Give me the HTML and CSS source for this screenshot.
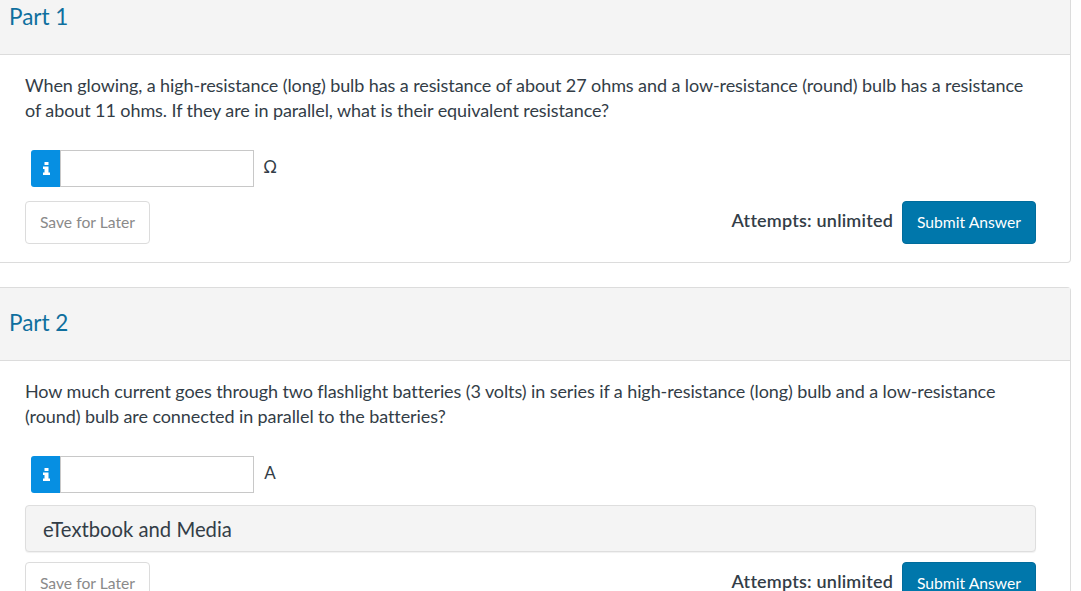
FILE: index.html
```html
<!DOCTYPE html>
<html lang="en">
<head>
<meta charset="utf-8">
<title>Parts</title>
<link rel="stylesheet" href="styles.css">
</head>
<body>
<main class="page">
  <section class="card">
    <header class="card-head"><h2>Part 1</h2></header>
    <div class="card-body">
      <p class="question">When glowing, a high-resistance (long) bulb has a resistance of about 27 ohms and a low-resistance (round) bulb has a resistance of about 11 ohms. If they are in parallel, what is their equivalent resistance?</p>
      <div class="answer">
        <span class="info"><svg viewBox="0 0 7 13" width="7" height="13"><path d="M1.5 0h4v3h-4zM0 4.5h5.5v6H7V13H0v-2.5h1.5V7H0z" fill="#fff"/></svg></span>
        <span class="field"></span>
        <span class="unit">Ω</span>
      </div>
      <div class="actions">
        <button class="btn btn-save">Save for Later</button>
        <div class="submit-group">
          <span class="attempts">Attempts: unlimited</span>
          <button class="btn btn-submit">Submit Answer</button>
        </div>
      </div>
    </div>
  </section>
  <section class="card">
    <header class="card-head"><h2>Part 2</h2></header>
    <div class="card-body">
      <p class="question">How much current goes through two flashlight batteries (3 volts) in series if a high-resistance (long) bulb and a low-resistance (round) bulb are connected in parallel to the batteries?</p>
      <div class="answer">
        <span class="info"><svg viewBox="0 0 7 13" width="7" height="13"><path d="M1.5 0h4v3h-4zM0 4.5h5.5v6H7V13H0v-2.5h1.5V7H0z" fill="#fff"/></svg></span>
        <span class="field"></span>
        <span class="unit">A</span>
      </div>
      <div class="media">eTextbook and Media</div>
      <div class="actions">
        <button class="btn btn-save">Save for Later</button>
        <div class="submit-group">
          <span class="attempts">Attempts: unlimited</span>
          <button class="btn btn-submit">Submit Answer</button>
        </div>
      </div>
    </div>
  </section>
</main>
</body>
</html>
```
FILE: styles.css
```css
html, body {
  margin: 0;
  padding: 0;
  height: 591px;
  overflow: hidden;
  background: #fff;
}
.page {
  width: 1071px;
  margin-top: -19px;
  font-family: Lato, "Liberation Sans", sans-serif;
  color: #333d47;
  display: flex;
  flex-direction: column;
  gap: 24px;
}
.card {
  border: 1px solid #dcdcdc;
  border-left: 0;
  border-radius: 0 4px 4px 0;
  background: #fff;
}
.card-head {
  height: 73px;
  box-sizing: border-box;
  background: #f4f4f4;
  border-bottom: 1px solid #dcdcdc;
  display: flex;
  align-items: center;
  padding: 0 0 3px 9px;
}
.card-head h2 {
  margin: 0;
  font-size: 22.5px;
  font-weight: 400;
  color: #0f6f9e;
}
.card-body {
  padding: 18px 34px 18px 25px;
}
.question {
  margin: 0;
  font-size: 18px;
  line-height: 25px;
  letter-spacing: -0.09px;
}
.answer {
  display: flex;
  align-items: center;
  height: 37px;
  margin: 27px 0 0 6px;
}
.info {
  width: 29px;
  height: 37px;
  box-sizing: border-box;
  background: #068fe2;
  border-radius: 3px 0 0 3px;
  display: flex;
  align-items: center;
  justify-content: center;
  padding-left: 2px;
}
.field {
  width: 194px;
  height: 37px;
  box-sizing: border-box;
  border: 1px solid #c8c8c8;
  background: #fff;
}
.unit {
  margin-left: 9px;
  width: 14px;
  text-align: center;
  font-size: 17px;
  padding-bottom: 5px;
}
.actions {
  display: flex;
  justify-content: space-between;
  align-items: flex-start;
  margin-top: 14px;
}
.submit-group {
  display: flex;
  align-items: flex-start;
  gap: 9px;
}
.attempts {
  font-size: 18px;
  font-weight: 600;
  line-height: 38px;
  letter-spacing: 0.2px;
}
.btn {
  height: 43px;
  box-sizing: border-box;
  border-radius: 4px;
  font-family: inherit;
  font-size: 15.7px;
  padding: 0 0 2px;
  cursor: pointer;
}
.btn-save {
  width: 125px;
  background: #fff;
  border: 1px solid #dcdcdc;
  color: #8a8a8a;
}
.btn-submit {
  width: 134px;
  background: #0077ab;
  border: 1px solid #006c9c;
  color: #fff;
}
.media {
  margin-top: 12px;
  height: 47px;
  box-sizing: border-box;
  background: #f4f4f4;
  border: 1px solid #dedede;
  border-radius: 4px;
  box-shadow: 0 1px 1px rgba(0, 0, 0, 0.06);
  font-size: 20.25px;
  line-height: 47px;
  padding-left: 17px;
}
.media + .actions {
  margin-top: 10px;
}
```
